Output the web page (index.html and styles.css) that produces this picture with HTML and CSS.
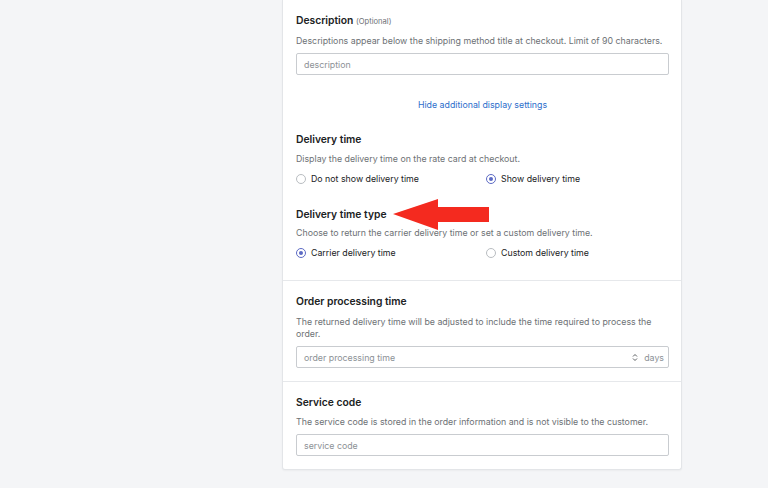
FILE: index.html
```html
<!DOCTYPE html>
<html lang="en">
<head>
<meta charset="utf-8">
<title>Shipping method</title>
<link rel="stylesheet" href="styles.css">
</head>
<body>
<div class="page">
  <div class="card">
    <section class="section first">
      <h3 class="title">Description <span class="optional">(Optional)</span></h3>
      <p class="help h-first">Descriptions appear below the shipping method title at checkout. Limit of 90 characters.</p>
      <div class="input"><span class="ph">description</span></div>
      <div class="link-row"><a class="link" href="#">Hide additional display settings</a></div>

      <h3 class="title t-delivery">Delivery time</h3>
      <p class="help">Display the delivery time on the rate card at checkout.</p>
      <div class="radios">
        <label class="radio"><span class="dot"></span>Do not show delivery time</label>
        <label class="radio"><span class="dot on"></span>Show delivery time</label>
      </div>

      <h3 class="title t-type">Delivery time type</h3>
      <p class="help h-type">Choose to return the carrier delivery time or set a custom delivery time.</p>
      <div class="radios">
        <label class="radio"><span class="dot on"></span>Carrier delivery time</label>
        <label class="radio"><span class="dot"></span>Custom delivery time</label>
      </div>
    </section>

    <section class="section">
      <h3 class="title">Order processing time</h3>
      <p class="help help-wrap">The returned delivery time will be adjusted to include the time required to process the order.</p>
      <div class="input">
        <span class="ph">order processing time</span>
        <svg class="spin" width="6" height="9" viewBox="0 0 6 9"><path d="M1 3.5 L3 1.5 L5 3.5 M1 5.5 L3 7.5 L5 5.5" fill="none" stroke="#5c5f62" stroke-width="1"/></svg>
        <span class="suffix">days</span>
      </div>
    </section>

    <section class="section">
      <h3 class="title">Service code</h3>
      <p class="help">The service code is stored in the order information and is not visible to the customer.</p>
      <div class="input"><span class="ph">service code</span></div>
    </section>
  </div>

  <svg class="arrow" width="100" height="34" viewBox="0 0 100 34">
    <polygon points="0,15 45,0 45,8 96,8 96,23 45,23 45,31" fill="#f42a1f"/>
  </svg>
</div>
</body>
</html>
```

FILE: styles.css
```css
* { box-sizing: border-box; }
html, body { margin: 0; padding: 0; }
body {
  background: #f4f5f7;
  font-family: Inter, "Noto Sans", sans-serif;
  color: #202223;
  height: 488px;
  overflow: hidden;
}
.page {
  position: relative;
  padding-left: 282px;
}
.card {
  width: 400px;
  background: #fff;
  border: 1px solid #e3e5e8;
  border-top: none;
  border-radius: 0 0 3px 3px;
  box-shadow: 0 1px 2px rgba(0,0,0,0.04);
}
.section {
  padding: 13px 12px 13px 13px;
  border-top: 1px solid #e6e8eb;
}
.section.first {
  border-top: none;
  padding-bottom: 20px;
}
.title {
  margin: 0;
  font-size: 10.3px;
  line-height: 14px;
  font-weight: 600;
  color: #202223;
}
.optional {
  font-size: 7.6px;
  font-weight: 400;
  color: #6d7175;
}
.help {
  margin: 7px 0 0;
  font-size: 8.8px;
  line-height: 12px;
  color: #6d7175;
}
.h-first, .h-type { margin-top: 6px; }
.help-wrap { margin-top: 8px; max-width: 366px; }
.input {
  margin-top: 6px;
  height: 22px;
  border: 1px solid #c9ccd0;
  border-radius: 2px;
  display: flex;
  align-items: center;
  padding: 0 4px 0 7px;
  font-size: 8.8px;
}
.ph { color: #8c9196; flex: 1; }
.spin { margin-right: 6px; }
.suffix { color: #8c9196; }
.link-row {
  margin-top: 24px;
  text-align: center;
  font-size: 8.8px;
  line-height: 12px;
}
.link { color: #2c6ecb; text-decoration: none; }
.t-delivery { margin-top: 21px; }
.t-type { margin-top: 21px; }
.radios {
  margin-top: 7px;
  display: grid;
  grid-template-columns: 190px 1fr;
  font-size: 8.8px;
  line-height: 14px;
  color: #202223;
}
.radio {
  display: flex;
  align-items: center;
  gap: 5px;
}
.dot {
  width: 10px;
  height: 10px;
  border-radius: 50%;
  border: 1px solid #b9bdc1;
  background: #fff;
  position: relative;
}
.dot.on {
  border-color: #5c6ac4;
}
.dot.on::after {
  content: "";
  position: absolute;
  left: 2px; top: 2px;
  width: 4px; height: 4px;
  border-radius: 50%;
  background: #5c6ac4;
}
.arrow {
  position: absolute;
  left: 393px;
  top: 199px;
}
```
